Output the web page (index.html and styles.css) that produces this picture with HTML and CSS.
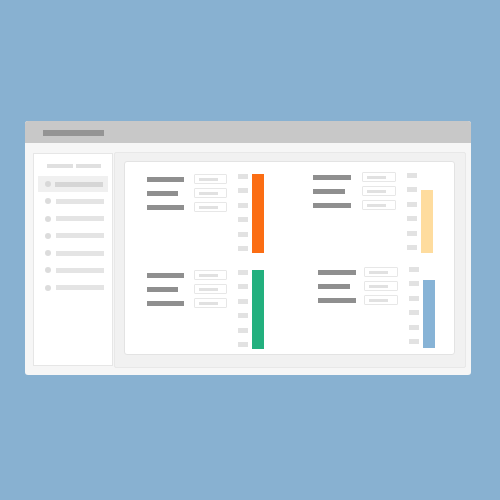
FILE: index.html
```html
<!DOCTYPE html>
<html>
<head>
<meta charset="utf-8">
<link rel="stylesheet" href="styles.css">
</head>
<body>
<div class="window">
  <div class="titlebar"><span class="title"></span></div>
  <div class="win-body">
    <aside class="sidebar">
      <div class="side-head"><span class="hb hb1"></span><span class="hb hb2"></span></div>
      <div class="item active"><span class="dot"></span><span class="line"></span></div>
      <div class="item"><span class="dot"></span><span class="line"></span></div>
      <div class="item"><span class="dot"></span><span class="line"></span></div>
      <div class="item"><span class="dot"></span><span class="line"></span></div>
      <div class="item"><span class="dot"></span><span class="line"></span></div>
      <div class="item"><span class="dot"></span><span class="line"></span></div>
      <div class="item"><span class="dot"></span><span class="line"></span></div>
    </aside>
    <main class="main">
      <div class="panel">
        <div class="block b1">
          <div class="labels"><span class="lab w37"></span><span class="lab w31"></span><span class="lab w37"></span></div>
          <div class="inputs"><span class="inp"><i></i></span><span class="inp"><i></i></span><span class="inp"><i></i></span></div>
          <div class="ticks"><span></span><span></span><span></span><span></span><span></span><span></span></div>
          <div class="barwrap"><span class="bar orange" style="height:79px"></span></div>
        </div>
        <div class="block b2">
          <div class="labels"><span class="lab w38"></span><span class="lab w32"></span><span class="lab w38"></span></div>
          <div class="inputs"><span class="inp"><i></i></span><span class="inp"><i></i></span><span class="inp"><i></i></span></div>
          <div class="ticks"><span></span><span></span><span></span><span></span><span></span><span></span></div>
          <div class="barwrap"><span class="bar yellow" style="height:63px"></span></div>
        </div>
        <div class="block b3">
          <div class="labels"><span class="lab w37"></span><span class="lab w31"></span><span class="lab w37"></span></div>
          <div class="inputs"><span class="inp"><i></i></span><span class="inp"><i></i></span><span class="inp"><i></i></span></div>
          <div class="ticks"><span></span><span></span><span></span><span></span><span></span><span></span></div>
          <div class="barwrap"><span class="bar green" style="height:79px"></span></div>
        </div>
        <div class="block b4">
          <div class="labels"><span class="lab w38"></span><span class="lab w32"></span><span class="lab w38"></span></div>
          <div class="inputs"><span class="inp"><i></i></span><span class="inp"><i></i></span><span class="inp"><i></i></span></div>
          <div class="ticks"><span></span><span></span><span></span><span></span><span></span><span></span></div>
          <div class="barwrap"><span class="bar blue" style="height:68px"></span></div>
        </div>
      </div>
    </main>
  </div>
</div>
</body>
</html>
```
FILE: styles.css
```css
html, body {
  margin: 0;
  padding: 0;
  background: #88b1d1;
  font-family: "Liberation Sans", Arial, sans-serif;
}
body {
  width: 500px;
  height: 500px;
  padding-top: 121px;
  padding-left: 25px;
  box-sizing: border-box;
}
.window {
  width: 446px;
  height: 254px;
  border-radius: 3px;
  overflow: hidden;
  background: #f6f6f6;
  display: flex;
  flex-direction: column;
}
.titlebar {
  height: 22px;
  background: #c8c8c8;
  display: flex;
  align-items: center;
  padding-left: 18px;
  flex: none;
}
.title {
  display: block;
  width: 61px;
  height: 6px;
  margin-top: 2px;
  background: #949494;
}
.win-body {
  flex: 1;
  display: flex;
  padding: 10px 5px 7px 8px;
  box-sizing: border-box;
}
.sidebar {
  width: 80px;
  flex: none;
  background: #fff;
  border: 1px solid #e6e6e6;
  box-sizing: border-box;
  padding: 10px 4px 0 4px;
  margin-bottom: 2px;
}
.side-head {
  display: flex;
  gap: 3px;
  padding-left: 9px;
  height: 4px;
  margin-bottom: 8px;
}
.hb {
  display: block;
  height: 4px;
  background: #e0e0e0;
}
.hb1 { width: 26px; }
.hb2 { width: 25px; }
.item {
  height: 17.3px;
  display: flex;
  align-items: center;
  padding-left: 7px;
  gap: 5px;
}
.item.active {
  height: 16px;
  background: #f0f0f0;
  margin-bottom: 0.6px;
  gap: 4px;
}
.dot {
  width: 6px;
  height: 6px;
  border-radius: 50%;
  background: #dcdcdc;
  flex: none;
}
.line {
  width: 48px;
  height: 5px;
  background: #e4e4e4;
}
.item.active .line {
  background: #d6d6d6;
  height: 5px;
}
.item.active .dot {
  background: #d8d8d8;
}
.main {
  flex: 1;
  margin-left: 1px;
  margin-top: -1px;
  background: #f1f1f1;
  border: 1px solid #e8e8e8;
  border-radius: 2px;
  padding: 8px 10px 12px 9px;
  display: flex;
}
.panel {
  flex: 1;
  background: #fff;
  border: 1px solid #e3e3e3;
  border-radius: 3px;
  display: grid;
  grid-template-columns: 166px 1fr;
  grid-template-rows: 96px 1fr;
  padding: 12px 0 0 22px;
}
.block {
  display: flex;
  align-items: flex-start;
}
.b2 .labels, .b2 .inputs { margin-top: -2px; }
.b2 .ticks { margin-top: -1px; }
.b4 { margin-top: -1px; padding-left: 5px; }
.b4 .labels, .b4 .inputs, .b4 .ticks { margin-top: -2px; }
.labels, .inputs {
  display: flex;
  flex-direction: column;
  gap: 4px;
}
.labels {
  width: 37px;
  margin-right: 10px;
}
.b2 .labels { width: 38px; margin-right: 11px; }
.b4 .labels { width: 39px; margin-right: 7px; }
.lab {
  height: 10px;
  display: flex;
  align-items: center;
}
.lab::before {
  content: "";
  display: block;
  height: 5px;
  width: 100%;
  background: #8f8f8f;
}
.w37 { width: 37px; }
.w31 { width: 31px; }
.w38 { width: 38px; }
.w32 { width: 32px; }
.inp {
  width: 33px;
  height: 10px;
  border: 1px solid #e7e7e7;
  box-sizing: border-box;
  border-radius: 1px;
  display: flex;
  align-items: center;
  padding-left: 4px;
  background: #fff;
}
.inp i {
  display: block;
  width: 19px;
  height: 3px;
  background: #e1e1e1;
}
.inputs { margin-right: 11px; }
.b2 .inp, .b4 .inp { width: 34px; }
.ticks {
  display: flex;
  flex-direction: column;
  gap: 9.4px;
  margin-right: 4px;
}
.ticks span {
  display: block;
  width: 10px;
  height: 5px;
  background: #e2e2e2;
}
.barwrap {
  height: 79px;
  display: flex;
  align-items: flex-end;
}
.bar {
  display: block;
  width: 12px;
}
.orange { background: #fb6d13; }
.yellow { background: #fedc9e; }
.green { background: #23b07e; }
.blue { background: #87b3d6; }
```
